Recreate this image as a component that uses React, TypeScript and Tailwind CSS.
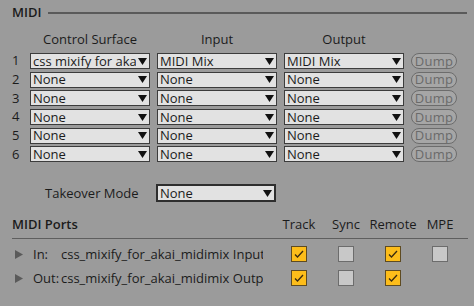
import React from "react";

const rows = [
  { cs: "css mixify for akai midimix", input: "MIDI Mix", output: "MIDI Mix" },
  { cs: "None", input: "None", output: "None" },
  { cs: "None", input: "None", output: "None" },
  { cs: "None", input: "None", output: "None" },
  { cs: "None", input: "None", output: "None" },
  { cs: "None", input: "None", output: "None" },
];

const ports = [
  { dir: "In:", name: "css_mixify_for_akai_midimix Input", checks: [true, false, true, false] },
  { dir: "Out:", name: "css_mixify_for_akai_midimix Output", checks: [true, false, true, null] },
];

const Dropdown = ({ value, strong = false }: { value: string; strong?: boolean }) => (
  <div
    className={`w-[120px] flex items-center bg-[#e2e2e2] ${
      strong ? "h-[18px] border-2 border-[#2e2e2e]" : "h-[16px] border border-[#3c3c3c]"
    }`}
  >
    <span className="flex-1 overflow-hidden whitespace-nowrap pl-[2px] leading-none">{value}</span>
    <svg width="9" height="7" viewBox="0 0 9 7" className="mx-[2px] shrink-0">
      <path d="M0 0 H9 L4.5 7 Z" fill="#111" />
    </svg>
  </div>
);

const Check = ({ on }: { on: boolean | null }) => {
  if (on === null) return <div className="w-[16px] h-[16px]" />;
  return (
    <div
      className={`w-[16px] h-[16px] border flex items-center justify-center ${
        on ? "bg-[#fdbd1a] border-[#5e4b22]" : "bg-[#c8c8c8] border-[#6c6c6c]"
      }`}
    >
      {on && (
        <svg width="12" height="10" viewBox="0 0 12 10">
          <path d="M2 5.5 L4.5 8 L10 2" fill="none" stroke="#3a2a10" strokeWidth="1.3" />
        </svg>
      )}
    </div>
  );
};

export default function App() {
  return (
    <div
      className="w-[474px] h-[306px] overflow-hidden bg-[#9b9b9b] text-[#1b1b1b] text-[13px] pl-[12px]"
      style={{ fontFamily: '"Open Sans", "Liberation Sans", sans-serif' }}
    >
      <div className="h-[26px] flex items-center gap-[7px] pr-[7px]">
        <span className="font-semibold">MIDI</span>
        <div className="flex-1 h-[2px] bg-[#5a5a5a]" />
      </div>

      <div className="flex h-[14px] mt-[7px] items-center pl-[18px] gap-[7px]">
        <span className="w-[120px] text-center">Control Surface</span>
        <span className="w-[120px] text-center">Input</span>
        <span className="w-[120px] text-center">Output</span>
      </div>

      <div className="flex flex-col gap-[2.7px] mt-[6px]">
        {rows.map((r, i) => (
          <div key={i} className="flex items-center h-[16px]">
            <span className="w-[18px]">{i + 1}</span>
            <div className="flex gap-[7px]">
              <Dropdown value={r.cs} />
              <Dropdown value={r.input} />
              <Dropdown value={r.output} />
            </div>
            <div className="ml-[7px] w-[46px] h-[16px] rounded-full border-[1.5px] border-[#6c6c6c] bg-[#a6a6a6] text-[#6a6a6a] tracking-[0.3px] flex items-center justify-center leading-none">
              Dump
            </div>
          </div>
        ))}
      </div>

      <div className="flex items-center mt-[22px] h-[18px]">
        <span className="w-[144px] pl-[33px]">Takeover Mode</span>
        <Dropdown value="None" strong />
      </div>

      <div className="flex items-center h-[18px] mt-[13px]">
        <span className="w-[263.5px] font-semibold">MIDI Ports</span>
        {["Track", "Sync", "Remote", "MPE"].map((h) => (
          <span key={h} className="w-[47px] text-center font-medium">
            {h}
          </span>
        ))}
      </div>
      <div className="h-px bg-[#5e5e5e] mr-[6px] mt-[5px]" />

      <div className="flex flex-col gap-[8px] mt-[7px]">
        {ports.map((p) => (
          <div key={p.dir} className="flex items-center h-[16px]">
            <div className="w-[251px] flex items-center overflow-hidden whitespace-nowrap">
              <svg width="8" height="9" viewBox="0 0 8 9" className="ml-[3px] shrink-0">
                <path d="M0 0 L8 4.5 L0 9 Z" fill="#5a5a5a" />
              </svg>
              <span className="ml-[10px] w-[28px] shrink-0">{p.dir}</span>
              <span className="shrink-0">{p.name}</span>
            </div>
            <div className="ml-[12.5px] flex">
              {p.checks.map((c, j) => (
                <div key={j} className="w-[47px] flex justify-center">
                  <Check on={c} />
                </div>
              ))}
            </div>
          </div>
        ))}
      </div>
    </div>
  );
}
